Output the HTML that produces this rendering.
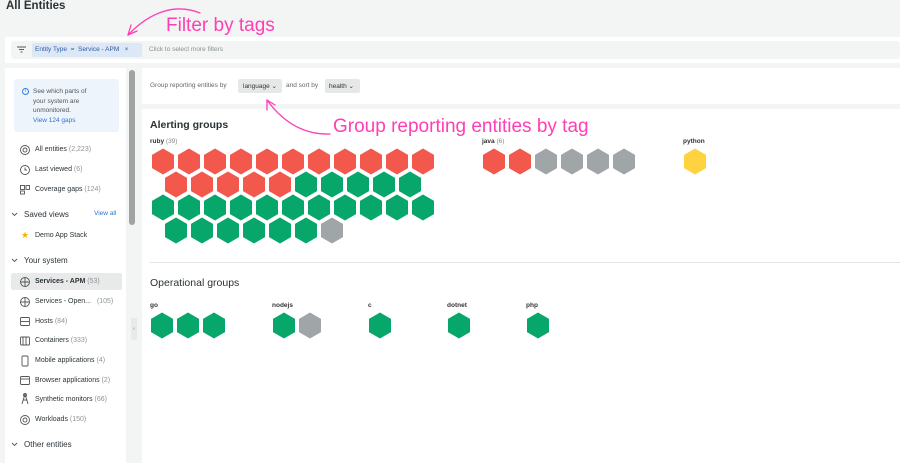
<!DOCTYPE html>
<html><head><meta charset="utf-8"><style>
*{margin:0;padding:0;box-sizing:border-box}
body{width:900px;height:463px;overflow:hidden;background:#f3f4f4;font-family:"Liberation Sans",sans-serif;position:relative;color:#293338}
.a{position:absolute;white-space:nowrap}
.si{position:absolute;left:35px;font-size:7px;color:#2b3438;white-space:nowrap}
.si i{font-style:normal;color:#8e9494}
.sec{position:absolute;left:24px;font-size:8px;color:#2b3438;white-space:nowrap}
.lab{font-size:6.5px;font-weight:bold;color:#333}
.lab i{font-style:normal;font-weight:normal;color:#888}
</style></head><body>
<div class="a" style="left:6px;top:0;font-size:11.5px;font-weight:bold;color:#2a3235">All Entities</div>

<div class="a" style="left:5px;top:37px;width:895px;height:26px;background:#fff"></div>
<div class="a" style="left:11px;top:41px;width:889px;height:18px;background:#f3f4f4;border-radius:3px"></div>
<svg class="a" style="left:17px;top:46px" width="9" height="7"><path d="M0 1H9M2 3.5H7M3.5 6H5.5" stroke="#555" stroke-width="1"/></svg>
<div class="a" style="left:32px;top:43px;width:110px;height:14px;background:#dde8f7;border-radius:2px"></div>
<div class="a" style="left:35px;top:46px;font-size:6.5px;color:#2e5aa0">Entity Type &nbsp;= &nbsp;Service - APM &nbsp;&nbsp;×</div>
<div class="a" style="left:149px;top:46px;font-size:6.5px;color:#8a9092">Click to select more filters</div>

<div class="a" style="left:5px;top:68px;width:121px;height:395px;background:#fff"></div>
<div class="a" style="left:129px;top:70px;width:6px;height:155px;background:#9fa3a4;border-radius:3px"></div>
<div class="a" style="left:131px;top:318px;width:6px;height:22px;background:#e8eaea;font-size:5px;color:#666;text-align:center;line-height:22px">‹</div>
<div class="a" style="left:14px;top:79px;width:105px;height:53px;background:#eef4fb;border-radius:3px"></div>
<div class="a" style="left:22px;top:88px;width:7px;height:7px;border:1px solid #3a7bd5;border-radius:50%;font-size:5px;color:#3a7bd5;text-align:center;line-height:5px">i</div>
<div class="a" style="left:33px;top:87px;font-size:6.5px;line-height:9.5px;color:#555">See which parts of<br>your system are<br>unmonitored.</div>
<div class="a" style="left:33px;top:117px;font-size:6.5px;color:#2f74d0">View 124 gaps</div>

<div class="si" style="top:146px">All entities <i>(2,223)</i></div>
<div class="si" style="top:166px">Last viewed <i>(6)</i></div>
<div class="si" style="top:186px">Coverage gaps <i>(124)</i></div>
<div class="sec" style="top:210px">Saved views</div>
<div class="a" style="left:94px;top:210px;font-size:6.5px;color:#2f74d0">View all</div>
<div class="a" style="left:21px;top:230px;font-size:9px;color:#f5b400">★</div>
<div class="si" style="top:232px">Demo App Stack</div>
<div class="sec" style="top:256px">Your system</div>
<div class="a" style="left:11px;top:273px;width:111px;height:17px;background:#e8eaea;border-radius:2px"></div>
<div class="si" style="top:278px"><b>Services - APM</b> <i>(53)</i></div>
<div class="si" style="top:298px">Services - Open... &nbsp;&nbsp;<i>(105)</i></div>
<div class="si" style="top:318px">Hosts <i>(84)</i></div>
<div class="si" style="top:337px">Containers <i>(333)</i></div>
<div class="si" style="top:357px">Mobile applications <i>(4)</i></div>
<div class="si" style="top:377px">Browser applications <i>(2)</i></div>
<div class="si" style="top:396px">Synthetic monitors <i>(66)</i></div>
<div class="si" style="top:416px">Workloads <i>(150)</i></div>
<div class="sec" style="top:440px">Other entities</div>
<svg class="a" style="left:10px;top:140px" width="24" height="320" fill="none" stroke="#555" stroke-width="0.9">
<circle cx="15" cy="10" r="4.5"/><circle cx="15" cy="10" r="2"/>
<circle cx="15" cy="30" r="4.5"/><path d="M15 27.5V30H17"/>
<rect x="10.5" y="45.5" width="4" height="4"/><rect x="16" y="45.5" width="3.5" height="4"/><rect x="10.5" y="51" width="4" height="3"/>
<path d="M2 73L4.5 75.5L7 73"/>
<path d="M2 119L4.5 121.5L7 119"/>
<path d="M2 303L4.5 305.5L7 303"/>
<g transform="translate(10,137)">
<circle cx="5" cy="5" r="4.5"/><path d="M0.5 5H9.5M5 0.5V9.5"/>
<circle cx="5" cy="25" r="4.5"/><path d="M0.5 25H9.5M5 20.5V29.5"/>
<rect x="0.5" y="40.5" width="9" height="8" rx="1"/><path d="M0.5 44.5H9.5"/>
<rect x="0.5" y="60" width="9" height="8" rx="1"/><path d="M3 60V68M6 60V68"/>
<rect x="2" y="79" width="6" height="10" rx="1"/>
<rect x="0.5" y="99.5" width="9" height="8" rx="1"/><path d="M0.5 102H9.5"/>
<path d="M5 117L2 127M5 117L8 127M3 123H7"/><circle cx="5" cy="118" r="1.5"/>
<circle cx="5" cy="143" r="4.5"/><circle cx="5" cy="143" r="2"/>
</g>
</svg>

<div class="a" style="left:142px;top:68px;width:758px;height:36px;background:#fff"></div>
<div class="a" style="left:142px;top:109px;width:758px;height:354px;background:#fff"></div>
<div class="a" style="left:150px;top:82px;font-size:6.5px;color:#666">Group reporting entities by</div>
<div class="a" style="left:238px;top:79px;width:44px;height:14px;background:#e6e8e8;border-radius:2px"></div>
<div class="a" style="left:243px;top:82px;font-size:6.5px;color:#333">language ⌄</div>
<div class="a" style="left:286px;top:82px;font-size:6.5px;color:#666">and sort by</div>
<div class="a" style="left:325px;top:79px;width:35px;height:14px;background:#e6e8e8;border-radius:2px"></div>
<div class="a" style="left:329px;top:82px;font-size:6.5px;color:#333">health ⌄</div>

<div class="a" style="left:150px;top:119px;font-size:10.5px;font-weight:bold;color:#2a3235">Alerting groups</div>
<div class="a lab" style="left:150px;top:138px">ruby <i>(39)</i></div>
<div class="a lab" style="left:482px;top:138px">java <i>(6)</i></div>
<div class="a lab" style="left:683px;top:138px">python</div>
<div class="a" style="left:150px;top:262px;width:750px;height:1px;background:#e3e5e5"></div>
<div class="a" style="left:150px;top:277px;font-size:10.5px;color:#2a3235">Operational groups</div>
<div class="a lab" style="left:150px;top:302px">go</div>
<div class="a lab" style="left:272px;top:302px">nodejs</div>
<div class="a lab" style="left:368px;top:302px">c</div>
<div class="a lab" style="left:447px;top:302px">dotnet</div>
<div class="a lab" style="left:526px;top:302px">php</div>

<svg class="a" style="left:0;top:0" width="900" height="463">
<defs><polygon id="h" points="12,0.5 23,6.9 23,20.1 12,26.5 1,20.1 1,6.9"/></defs>
<g fill="#f2584b">
<use href="#h" x="151" y="148"/><use href="#h" x="177" y="148"/><use href="#h" x="203" y="148"/><use href="#h" x="229" y="148"/><use href="#h" x="255" y="148"/><use href="#h" x="281" y="148"/><use href="#h" x="307" y="148"/><use href="#h" x="333" y="148"/><use href="#h" x="359" y="148"/><use href="#h" x="385" y="148"/><use href="#h" x="411" y="148"/>
<use href="#h" x="164" y="171"/><use href="#h" x="190" y="171"/><use href="#h" x="216" y="171"/><use href="#h" x="242" y="171"/><use href="#h" x="268" y="171"/>
<use href="#h" x="482" y="148"/><use href="#h" x="508" y="148"/>
</g>
<g fill="#07a66a">
<use href="#h" x="294" y="171"/><use href="#h" x="320" y="171"/><use href="#h" x="346" y="171"/><use href="#h" x="372" y="171"/><use href="#h" x="398" y="171"/>
<use href="#h" x="151" y="194"/><use href="#h" x="177" y="194"/><use href="#h" x="203" y="194"/><use href="#h" x="229" y="194"/><use href="#h" x="255" y="194"/><use href="#h" x="281" y="194"/><use href="#h" x="307" y="194"/><use href="#h" x="333" y="194"/><use href="#h" x="359" y="194"/><use href="#h" x="385" y="194"/><use href="#h" x="411" y="194"/>
<use href="#h" x="164" y="217"/><use href="#h" x="190" y="217"/><use href="#h" x="216" y="217"/><use href="#h" x="242" y="217"/><use href="#h" x="268" y="217"/><use href="#h" x="294" y="217"/>
<use href="#h" x="150" y="312"/><use href="#h" x="176" y="312"/><use href="#h" x="202" y="312"/>
<use href="#h" x="272" y="312"/><use href="#h" x="368" y="312"/><use href="#h" x="447" y="312"/><use href="#h" x="526" y="312"/>
</g>
<g fill="#a0a5a8">
<use href="#h" x="320" y="217"/><use href="#h" x="534" y="148"/><use href="#h" x="560" y="148"/><use href="#h" x="586" y="148"/><use href="#h" x="612" y="148"/><use href="#h" x="298" y="312"/>
</g>
<use href="#h" x="683" y="148" fill="#ffd23f"/>
<g fill="none" stroke="#ff3eb5" stroke-width="1.3" stroke-linecap="round">
<path d="M200 13C175 3 150 12 128 35"/><path d="M128 35L131 25M128 35L137 31"/>
<path d="M330 134C300 135 280 118 267 100"/><path d="M267 100L267 110M267 100L275 105"/>
</g>
</svg>
<div class="a" style="left:166px;top:15px;font-size:19px;color:#ff3eb5">Filter by tags</div>
<div class="a" style="left:333px;top:116px;font-size:19px;color:#ff3eb5">Group reporting entities by tag</div>
</body></html>
